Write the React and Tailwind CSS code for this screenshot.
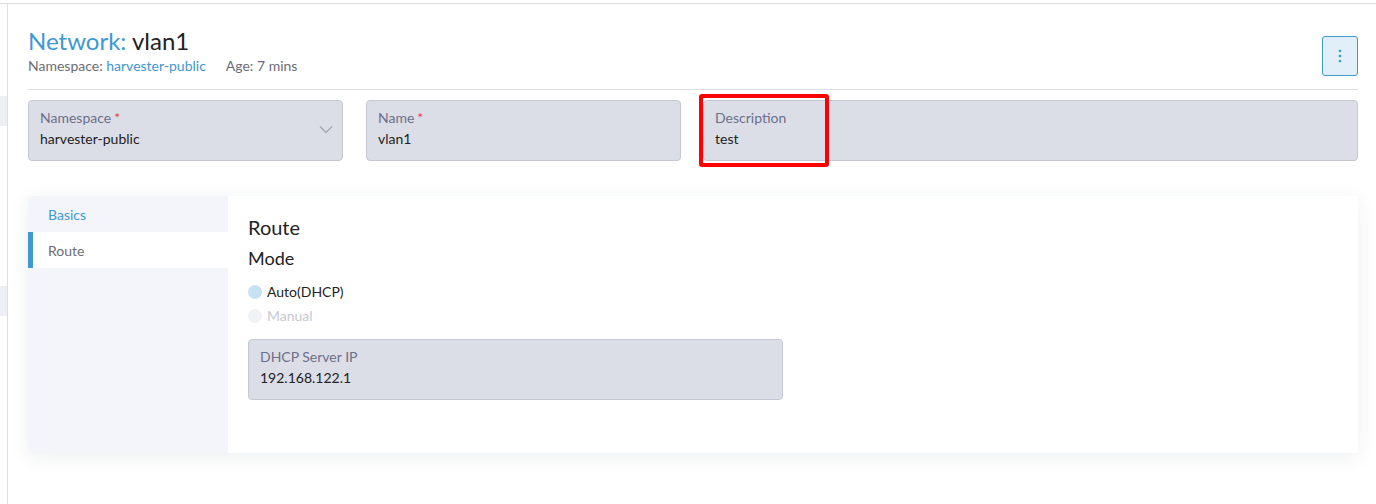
import React from 'react';

function Field({ label, value, required, dropdown, className }) {
  return (
    <div className={`relative h-[61px] rounded-[4px] border border-[#c5c7d4] bg-[#dcdee7] px-[11px] pt-[8px] ${className || ''}`}>
      <div className="text-[14px] leading-[18px] text-[#6b6f8a]">
        {label}
        {required && <span className="ml-[3px] text-[#e0434b]">*</span>}
      </div>
      <div className="mt-[3px] text-[14px] leading-[18px] text-[#222]">{value}</div>
      {dropdown && (
        <svg className="absolute right-[9px] top-[24px]" width="14" height="9" viewBox="0 0 14 9" fill="none">
          <path d="M1 1.5l6 6 6-6" stroke="#a5a8b8" strokeWidth="1.4" />
        </svg>
      )}
    </div>
  );
}

export default function App() {
  return (
    <div className="h-[504px] w-[1376px] overflow-hidden bg-white font-['Lato','Liberation_Sans',sans-serif]">
      <div className="h-[4px] border-b border-[#dcdee7]" />
      <div className="flex h-[500px]">
        {/* side strip */}
        <div className="w-[8px] shrink-0 border-r border-[#dcdee7]">
          <div className="mt-[92px] h-[30px] bg-[#eeeff4]" />
          <div className="mt-[160px] h-[30px] bg-[#eeeff4]" />
        </div>

        <div className="flex-1 pl-[20px] pr-[18px]">
          <div className="flex items-start justify-between pt-[23px]">
            <div>
              <h1 className="text-[24px] leading-[28px] text-[#222]">
                <span className="text-[#3d98d3]">Network:</span> vlan1
              </h1>
              <div className="mt-[2px] text-[14px] leading-[18px] text-[#6c6c76]">
                Namespace: <span className="text-[#3d98d3]">harvester-public</span>
                <span className="ml-[20px]">Age: 7 mins</span>
              </div>
            </div>
            <button className="mt-[9px] flex h-[40px] w-[36px] items-center justify-center rounded-[3px] border border-[#3d98d3] bg-[#e1eff9]">
              <svg width="4" height="14" viewBox="0 0 4 14">
                <circle cx="2" cy="2" r="1.3" fill="#3d98d3" />
                <circle cx="2" cy="7" r="1.3" fill="#3d98d3" />
                <circle cx="2" cy="12" r="1.3" fill="#3d98d3" />
              </svg>
            </button>
          </div>

          <div className="mt-[13px] border-t border-[#dcdee7]" />

          <div className="mt-[10px] flex">
            <Field className="w-[315px]" label="Namespace" value="harvester-public" required dropdown />
            <Field className="ml-[23px] w-[315px]" label="Name" value="vlan1" required />
            <div className="relative ml-[22px] flex-1">
              <Field label="Description" value="test" />
              <div className="pointer-events-none absolute left-[-4px] top-[-6px] h-[73px] w-[130px] rounded-[3px] border-[4px] border-[#ff0000]" />
            </div>
          </div>

          <div className="mt-[35px] flex h-[257px] overflow-hidden rounded-[4px] shadow-[0_4px_20px_rgba(40,45,80,0.08)]">
            <div className="w-[200px] shrink-0 bg-[#f4f5fa]">
              <div className="flex h-[36px] items-center pl-[20px] text-[14px] text-[#3d98d3]">Basics</div>
              <div className="flex h-[36px] items-center border-l-[5px] border-[#3d98d3] bg-white pl-[15px] text-[14px] text-[#6c6c76]">
                Route
              </div>
            </div>
            <div className="flex-1 bg-white pl-[20px] pt-[18px]">
              <h2 className="text-[20px] leading-[26px] text-[#222]">Route</h2>
              <h3 className="mt-[6px] text-[18px] leading-[24px] text-[#222]">Mode</h3>
              <div className="mt-[13px] flex items-center text-[14px] leading-[18px] text-[#222]">
                <span className="mr-[5px] h-[14px] w-[14px] rounded-full bg-[#c7e2f3]" />
                Auto(DHCP)
              </div>
              <div className="mt-[6px] flex items-center text-[14px] leading-[18px] text-[#c6c7d1]">
                <span className="mr-[5px] h-[14px] w-[14px] rounded-full bg-[#f1f2f6]" />
                Manual
              </div>
              <Field className="mt-[14px] w-[535px]" label="DHCP Server IP" value="192.168.122.1" />
            </div>
          </div>
        </div>
      </div>
    </div>
  );
}
